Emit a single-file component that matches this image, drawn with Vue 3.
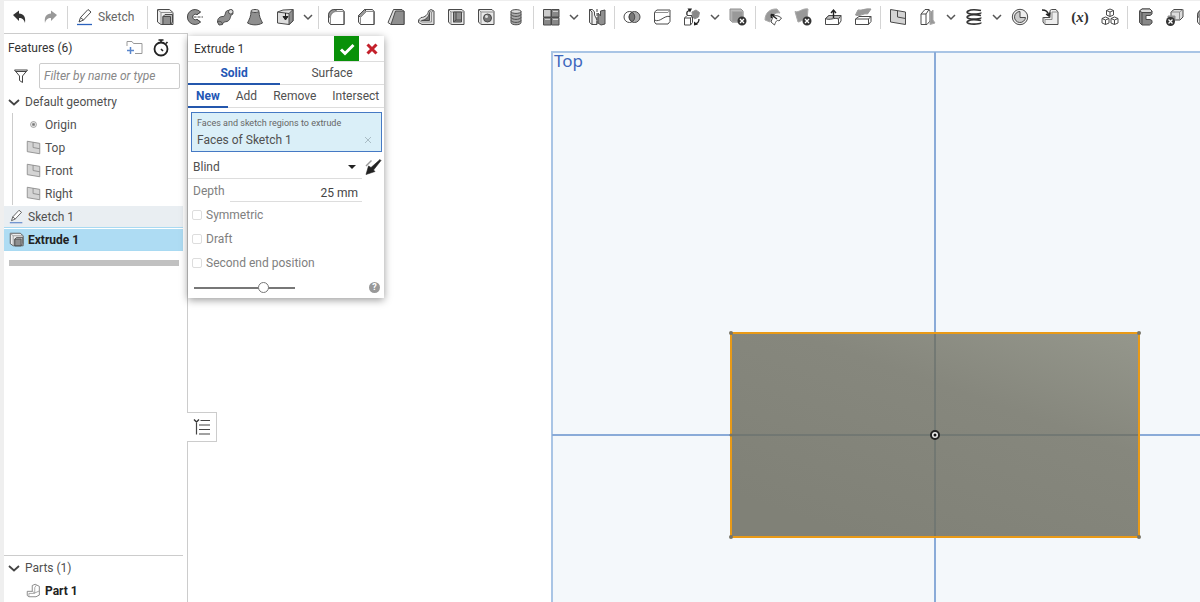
<script setup>
import { ref } from 'vue'

const circle = (x, y, r) => `M${x - r} ${y}a${r} ${r} 0 1 0 ${2 * r} 0a${r} ${r} 0 1 0 ${-2 * r} 0Z`

const D = '#4a4a4a'
const G = '#8f8f8f'
const L = '#e9e9e9'
const W = '#fff'
const N = 'none'
const badge = (x, y) => [
  { d: circle(x, y, 4.5), f: '#333', s: N },
  { d: `M${x - 2} ${y - 2}l4 4M${x + 2} ${y - 2}l-4 4`, f: N, s: W, w: 1.3 },
]

const icons = {
  undo: [{ d: 'M2 7 8 2.5V5.5C12.5 5.5 15 9 14 15 13 11.5 11.5 10 8 10V13Z', f: '#333', s: N }],
  redo: [{ d: 'M16 7 10 2.5V5.5C5.5 5.5 3 9 4 15 5 11.5 6.500 10 10 10V13Z', f: '#999', s: N }],
  pencil: [
    { d: 'M3 14 4.5 9.5 12 1.5 15 4 7.500 12ZM4.5 9.5 7.5 12', f: W, s: D },
    { d: 'M1 16.5H16', f: N, s: '#2b62bd', w: 1.3 },
  ],
  extrude: [
    { d: 'M1.500 1.5H13.5L17 4.5V16.5H5L1.5 14Z', f: '#eee', s: D },
    { d: 'M1.5 1.5 5 4.5V16.5M5 4.5H17', f: N, s: G },
    { d: 'M7 8.500 9 6.5H16.5V14L14.5 16.500H7Z', f: '#bbb', s: D },
    { d: 'M7 8.500H14.5V16.500H7Z', f: G, s: D },
  ],
  revolve: [
    { d: 'M14.500 4A7.500 7.500 0 1 0 14.500 14L11 11.300A2.800 2.800 0 1 1 11 6.700Z', f: G, s: D },
    { d: 'M14.500 4 11 6.700M14.500 14 11 11.300', f: W, s: D },
    { d: 'M7.500 9H17', f: N, s: D, dash: '3 1' },
  ],
  sweep: [
    { d: 'M1.500 14C1.500 10 4 8.500 7 8.500 10 8.500 8.500 3.500 11.500 2.500L16 2 17 6C13.500 6.500 15.500 12 11 13.500 8 14 7 14 6.500 16.500L3 17Z', f: G, s: D },
    { d: circle(14.8, 3.8, 2.3), f: '#ddd', s: D },
    { d: 'M1.500 14C3 12.500 6 13.500 6.500 16', f: N, s: D },
  ],
  loft: [
    { d: 'M5 3.500C5 8 3.500 11 1.500 15 6 17.500 12 17.500 16.500 15 14.500 11 13 8 13 3.500Z', f: G, s: D },
    { d: 'M5 3C5 1 13 1 13 3S5 5 5 3Z', f: '#ccc', s: D },
  ],
  thicken: [
    { d: 'M1.500 4 7 2 17 1.5V13L13 16.500 1.500 15Z', f: '#ddd', s: D },
    { d: 'M13 5.500 17 1.5V13L13 16.500Z', f: G, s: D },
    { d: 'M1.500 4 13 5.500', f: N, s: D },
    { d: 'M9.500 5V10M7 8.500H12L9.500 12Z', f: '#222', s: '#222' },
  ],
  fillet: [
    { d: 'M1.500 14V8C1.500 4 4 1.500 8 1.500H15.500L17 3.500V16.500H3.500Z', f: '#eee', s: D },
    { d: 'M1.500 8C1.500 4 4 1.500 8 1.500L10 3.500C6 3.500 3.500 6 3.500 10Z', f: '#999', s: D },
    { d: 'M3.500 16.500V10C3.500 6 6 3.500 10 3.500H17V16.500Z', f: W, s: G },
    { d: 'M17 3.500V16.500H3.500', f: N, s: D },
  ],
  chamfer: [
    { d: 'M1.500 14V7.500L7.500 1.500H15.500L17 3.500V16.500H3.500Z', f: '#eee', s: D },
    { d: 'M1.500 7.500 7.500 1.500 9.500 3.500 3.500 9.500Z', f: '#999', s: D },
    { d: 'M3.500 16.500V9.500L9.500 3.500H17V16.500Z', f: W, s: G },
    { d: 'M17 3.500V16.500H3.500', f: N, s: D },
  ],
  draft: [
    { d: 'M1 14.500 6.500 1.500H15L17 3.500V16.500H4Z', f: '#ddd', s: D },
    { d: 'M4 16.500 8.500 3H17V16.500Z', f: G, s: D },
  ],
  rib: [
    { d: 'M1.500 12 4 9.500C8 9.500 11 6.500 11.500 3L14 1.500 17 3V16.500H5L1.500 14.500Z', f: '#ddd', s: D },
    { d: 'M4.500 12.500C9 12 12 8.500 12.500 4.500V12.500Z', f: '#777', s: D },
    { d: 'M1.500 12 5 14H14.500V4L17 3M14.500 4 11.500 3', f: N, s: G },
  ],
  shell: [
    { d: 'M1.500 1.500H15L17 3.500V16.500H4L1.500 14Z', f: L, s: D },
    { d: 'M1.500 1.500 4 4V16.500M4 4H17', f: N, s: G },
    { d: 'M6.500 4H14.500V14H6.500Z', f: G, s: D },
    { d: 'M9 4V12L6.500 14M9 12H14.500', f: N, s: D },
  ],
  hole: [
    { d: 'M1.500 1.500H15L17 3.500V16.500H4L1.500 14Z', f: L, s: D },
    { d: 'M1.500 1.500 4 4V16.500M4 4H17', f: N, s: G },
    { d: circle(10.5, 10, 4), f: '#777', s: D },
    { d: circle(9.5, 8.5, 1.5), f: '#ddd', s: N },
  ],
  thread: [
    { d: 'M4 3.500V14.500C4 17.500 14 17.500 14 14.500V3.500Z', f: '#aaa', s: D },
    { d: 'M4 3.500C4 1 14 1 14 3.500S4 6 4 3.500Z', f: '#ddd', s: D },
    { d: 'M4 6.500C5 9 13 9 14 6.500M4 9.500C5 12 13 12 14 9.500M4 12.500C5 15 13 15 14 12.500', f: N, s: D },
  ],
  pattern: [
    { d: 'M1.500 1.500H9V9H1.500Z', f: '#ccc', s: D },
    { d: 'M9.500 1.500H17V9H9.500ZM1.500 9.500H9V17H1.500ZM9.500 9.500H17V17H9.500Z', f: '#888', s: D },
    { d: 'M3 3.500H8M11 3.500H16M3 11.500H8M11 11.500H16', f: N, s: '#ccc' },
  ],
  mirror: [
    { d: 'M1.500 1.500H4.500L6.500 4V7L9 12V16.500H4L1.500 14.500Z', f: '#eee', s: D },
    { d: 'M1.500 1.500 4 4V16.500', f: N, s: D },
    { d: 'M17 2 12.500 3V8L10 5V15L13 17 17 16Z', f: G, s: D },
    { d: 'M9 1V17', f: N, s: D, dash: '3 1' },
  ],
  boolean: [
    { d: circle(6.5, 9, 5.5), f: N, s: D },
    { d: circle(11.5, 9, 5.5), f: '#aaa', s: D },
    { d: 'M9 4.200A5.500 5.500 0 0 1 9 13.800 5.500 5.500 0 0 1 9 4.200Z', f: '#777', s: D },
  ],
  split: [
    { d: 'M1.500 4 4 2H17V13.500L15 16H3L1.500 14Z', f: W, s: D },
    { d: 'M1.500 4.500H15L17 2', f: N, s: G },
    { d: 'M1.500 12C7 15 11 7 17 8.500', f: N, s: D },
  ],
  transform: [
    { d: 'M1.500 10 4 7.500H9.500V14.500L7.500 17H1.500ZM1.500 10H7.500V17M7.500 10 9.500 7.500', f: W, s: D },
    { d: 'M9 4 13 2 16.500 4.500 15.500 9 11.500 11 9.500 8Z', f: '#888', s: G },
    { d: 'M4 7C3.500 4 4 3.500 6 2.500M16 11C16 14 14.500 15.500 12 16', f: N, s: '#222', w: 1.3 },
    { d: 'M4.500 .5H9L7 4.500ZM11 13.500V17.500L15 16.500Z', f: '#222', s: N },
  ],
  deletePart: [
    { d: 'M1 1H12L14 3V14H3L1 12Z', f: '#bbb', s: G },
    { d: 'M3 3.500H14V14H3Z', f: '#999', s: '#aaa' },
    ...badge(13, 13),
  ],
  modifyFillet: [
    { d: 'M1 12C1 5 6 .5 13 1L16 5C11 4 7 8 6 14Z', f: '#999', s: '#aaa' },
    { d: 'M9 8.500C12 7 14 7.500 17.500 10L15 13C13 11.500 12 13 10.500 17L7 14Z', f: W, s: D },
    { d: 'M13 11 7 6.500M7 6.500 7.500 10M7 6.500 10.500 7', f: N, s: '#222', w: 1.3 },
  ],
  deleteFace: [
    { d: 'M1 3.500C5 5 8 0 14 1L13 12C9 10 7 14 4 14Z', f: '#999', s: '#aaa' },
    ...badge(13, 13),
  ],
  moveFace: [
    { d: 'M1.500 10.500 5 7.500H17V13L14.500 16.500H1.500Z', f: W, s: D },
    { d: 'M1.500 10.500 5 7.500H17L14.500 11C10 9 6 13 1.500 10.500Z', f: '#bbb', s: D },
    { d: 'M14.500 11V16.500', f: N, s: D },
    { d: 'M9.500 10V2M7 5 9.500 2 12 5', f: N, s: '#222', w: 1.4 },
  ],
  replaceFace: [
    { d: 'M4 2C8 3 11 0 17 1L13.500 6C9 5 6 9 1.500 7Z', f: '#999', s: '#999' },
    { d: 'M1.500 11 5 8.500H17V13.500L14.500 16.500H1.500ZM1.500 11H14.500L17 8.500M14.500 11V16.500', f: W, s: D },
  ],
  plane: [
    { d: 'M1.500 1.500 16.500 4V16.500L1.500 14Z', f: '#d4d4d4', s: D },
    { d: 'M8.500 2.500V9L16.500 10.500', f: N, s: D },
  ],
  offsetPlane: [
    { d: 'M2 6 6 1.500H10L11 3V13L8 16.500H2ZM2 6H7V16.500M7 6 10 1.500', f: W, s: D },
    { d: 'M11 5 14 2V12L16 15 11 16.500Z', f: '#999', s: '#aaa' },
  ],
  helix: [
    { d: 'M16 2.500C3 0 -2 5 6 6C12 6.500 16 5.500 16 4.500M16 7.500C3 5 -2 10 6 11C12 11.500 16 10.500 16 9.500M16 12.500C3 10 -2 15 6 16C12 16.500 16 15.500 16 14.500', f: N, s: '#333', w: 1.6 },
  ],
  pipe: [
    { d: circle(9, 9, 7.7), f: '#eee', s: D },
    { d: 'M9 3.500A5.500 5.500 0 1 0 14.500 9.500H9Z', f: '#ccc', s: D },
  ],
  derive: [
    { d: 'M9 5.500V2.500L10.500 1.500H15L17 4V16.500H4L2 14V9.500H9Z', f: '#eee', s: D },
    { d: 'M4 16.500V11.500H11V4H17M2 9.500 4 11.500', f: N, s: G },
    { d: 'M1 2C5 2 7 3 7.500 7M5 6 8 8 9 4.500', f: N, s: '#222', w: 1.5 },
  ],
  cubes: [
    { d: 'M9 1 12.500 2.500V7L9 8.500 5.500 7V2.500ZM5.500 2.500 9 4 12.500 2.500M9 4V8.500', f: W, s: D },
    { d: 'M4.500 9 8 10.500V15L4.500 16.500 1 15V10.500ZM1 10.500 4.500 12 8 10.500M4.500 12V16.500', f: W, s: D },
    { d: 'M13.500 9 17 10.500V15L13.500 16.500 10 15V10.500ZM10 10.500 13.500 12 17 10.500M13.500 12V16.500', f: W, s: D },
  ],
  sheet: [
    { d: 'M3.500 3 6 1H14L16 3V6L14 7.500H10V11.500H14L16 12.500V15L13.500 17H6L3.500 14.500Z', f: '#888', s: D },
    { d: 'M3.500 3 6 1H14L16 3 15 4.500H6Z', f: '#ddd', s: D },
    { d: 'M6 4.500V16.500', f: N, s: D },
  ],
  finish: [
    { d: 'M5 4 8 1.500H17V9L14 12H5Z', f: '#ddd', s: D },
    { d: 'M5 4H13.500L17 1.500M13.500 4V11.500', f: N, s: G },
    { d: 'M2 8H9V12H2Z', f: G, s: G },
    ...badge(4.5, 13.5),
  ],
  folder: [
    { d: 'M2 7V2.500H7L8.500 4.500H17V14.500H10', f: N, s: '#999' },
    { d: 'M5.500 8V15M2 11.500H9', f: N, s: '#5a86cc', w: 1.5 },
  ],
  timer: [
    { d: circle(9, 10, 6.5), f: N, s: '#222', w: 1.8 },
    { d: 'M9 10 11 12M9 3V1M6.500 1H11.500M14 4.500 15.500 3', f: N, s: '#222', w: 1.6 },
  ],
  funnel: [{ d: 'M2.500 3H15.500L10.500 9V15.500L7.500 13.500V9ZM3.500 4.500H14.500', f: N, s: '#444' }],
  origin: [{ d: circle(9, 9, 3.5), f: N, s: '#888' }, { d: circle(9, 9, 1.5), f: '#777', s: N }],
  part: [
    { d: 'M1.500 10H7.500V3L11 1.500 16 4V14.500L12 16.500H3.500L1.500 15Z', f: W, s: '#777' },
    { d: 'M7.500 10 10.500 12V5.500L12.500 2.500M10.500 12 16 9.500M3.500 16.500V12.500H10.500', f: N, s: '#999' },
  ],
  list: [
    { d: 'M1 1.500 3.500 4 6 1.500', f: N, s: '#333', w: 1.4 },
    { d: 'M7.500 2.500H17M6 7H17M6 11.500H17M6 16H17M3.500 5V16.500', f: N, s: '#444', w: 1.2 },
  ],
  flip: [
    { d: 'M2 16.500 4.500 8 7 9.500 16 1.500 17 2.500 9.500 12 11 13.500Z', f: '#222', s: '#222', w: .6 },
    { d: 'M2 8 7.500 2.500', f: N, s: '#999', w: 1.5 },
  ],
  check: [{ d: 'M3 9.500 7 13.500 15.500 5', f: N, s: W, w: 3 }],
  cross: [{ d: 'M4.500 4.500 13.500 13.500M13.500 4.500 4.500 13.500', f: N, s: '#c4202b', w: 3 }],
}

const tools = [
  'extrude', 'revolve', 'sweep', 'loft', 'thicken', 'more', '|',
  'fillet', 'chamfer', 'draft', 'rib', 'shell', 'hole', 'thread', '|',
  'pattern', 'more', 'mirror', '|',
  'boolean', 'split', 'transform', 'more', 'deletePart', '|',
  'modifyFillet', 'deleteFace', 'moveFace', 'replaceFace', '|',
  'plane', 'offsetPlane', 'more', 'helix', 'more', 'pipe', 'derive', 'variable', 'cubes', '|',
  'sheet', 'finish', 'fillet',
]

const geometry = [
  { name: 'Origin', icon: 'origin' },
  { name: 'Top', icon: 'plane' },
  { name: 'Front', icon: 'plane' },
  { name: 'Right', icon: 'plane' },
]

const operations = ['New', 'Add', 'Remove', 'Intersect']
const body = ref('Solid')
const operation = ref('New')
const filter = ref('')
const depth = ref('25 mm')
const opacity = ref(71)
const options = ref([
  { name: 'Symmetric', on: false },
  { name: 'Draft', on: false },
  { name: 'Second end position', on: false },
])
</script>

<template>
  <div class="app">
    <header class="toolbar">
      <button v-for="n in ['undo', 'redo']" :key="n" class="tool" :aria-label="n">
        <svg class="icon" viewBox="0 0 18 18"><path v-for="(p, i) in icons[n]" :key="i" :d="p.d" :fill="p.f" :stroke="p.s" /></svg>
      </button>
      <span class="sep"></span>
      <button class="sketch">
        <svg class="icon" viewBox="0 0 18 18"><path v-for="(p, i) in icons.pencil" :key="i" :d="p.d" :fill="p.f" :stroke="p.s" :stroke-width="p.w" /></svg>
        Sketch
      </button>
      <span class="sep"></span>
      <template v-for="(t, k) in tools" :key="k">
        <span v-if="t === '|'" class="sep"></span>
        <button v-else-if="t === 'more'" class="more" aria-label="More tools">
          <svg class="chev" viewBox="0 0 10 10"><path d="M1 3 5 7 9 3" fill="none" stroke="#555" stroke-width="1.500" /></svg>
        </button>
        <button v-else-if="t === 'variable'" class="tool variable">(<i>x</i>)</button>
        <button v-else class="tool" :aria-label="t">
          <svg class="icon" viewBox="0 0 18 18"><path v-for="(p, i) in icons[t]" :key="i" :d="p.d" :fill="p.f" :stroke="p.s" :stroke-width="p.w" :stroke-dasharray="p.dash" /></svg>
        </button>
      </template>
    </header>

    <div class="workspace">
      <aside class="sidebar">
        <div class="heading">
          <span class="title">Features (6)</span>
          <button class="mini" aria-label="Add folder">
            <svg class="icon" viewBox="0 0 18 18"><path v-for="(p, i) in icons.folder" :key="i" :d="p.d" :fill="p.f" :stroke="p.s" :stroke-width="p.w" /></svg>
          </button>
          <button class="mini" aria-label="Regeneration times">
            <svg class="icon" viewBox="0 0 18 18"><path v-for="(p, i) in icons.timer" :key="i" :d="p.d" :fill="p.f" :stroke="p.s" :stroke-width="p.w" /></svg>
          </button>
        </div>
        <div class="filter">
          <svg class="icon" viewBox="0 0 18 18"><path v-for="(p, i) in icons.funnel" :key="i" :d="p.d" :fill="p.f" :stroke="p.s" /></svg>
          <input v-model="filter" type="text" aria-label="Filter features" placeholder="Filter by name or type">
        </div>
        <button class="row group">
          <svg class="fold" viewBox="0 0 12 12"><path d="M1 4 6 8.500 11 4" fill="none" stroke="#444" stroke-width="1.800" /></svg>
          Default geometry
        </button>
        <div class="branch">
          <button v-for="g in geometry" :key="g.name" class="row">
            <svg class="small" viewBox="0 0 18 18"><path v-for="(p, i) in icons[g.icon]" :key="i" :d="p.d" :fill="p.f" :stroke="p.s" /></svg>
            {{ g.name }}
          </button>
        </div>
        <button class="row feature">
          <svg class="small" viewBox="0 0 18 18"><path v-for="(p, i) in icons.pencil" :key="i" :d="p.d" :fill="p.f" :stroke="p.s" /></svg>
          Sketch 1
        </button>
        <button class="row feature active">
          <svg class="small" viewBox="0 0 18 18"><path v-for="(p, i) in icons.extrude" :key="i" :d="p.d" :fill="p.f" :stroke="p.s" /></svg>
          Extrude 1
        </button>
        <div class="rollback"></div>
        <section class="parts">
          <button class="row group">
            <svg class="fold" viewBox="0 0 12 12"><path d="M1 4 6 8.500 11 4" fill="none" stroke="#444" stroke-width="1.800" /></svg>
            Parts (1)
          </button>
          <button class="row part">
            <svg class="small" viewBox="0 0 18 18"><path v-for="(p, i) in icons.part" :key="i" :d="p.d" :fill="p.f" :stroke="p.s" /></svg>
            Part 1
          </button>
        </section>
      </aside>

      <main class="viewport">
        <svg class="scene">
          <defs>
            <linearGradient id="face" x1="0.300" y1="1" x2="1" y2="0">
              <stop offset="0" stop-color="#808177" />
              <stop offset="0.600" stop-color="#86877d" />
              <stop offset="1" stop-color="#95978c" />
            </linearGradient>
          </defs>
          <rect x="364" y="19" width="1600" height="1200" fill="#f4f8fb" stroke="#a9c5e5" stroke-width="2" />
          <path d="M747 19V1200M364 402H1964" stroke="#8aabd8" stroke-width="2" />
          <rect x="543" y="300" width="408" height="204" fill="url(#face)" stroke="#e99a17" stroke-width="2" />
          <path d="M747 301V503M544 402H950" stroke="#6e7571" stroke-width="2" opacity=".8" />
          <g fill="#777567">
            <circle cx="543" cy="300" r="2" /><circle cx="951" cy="300" r="2" />
            <circle cx="543" cy="504" r="2" /><circle cx="951" cy="504" r="2" /><circle cx="543" cy="402" r="1.500" />
          </g>
          <circle cx="747" cy="402" r="4" fill="#eee" stroke="#222" stroke-width="2" />
          <circle cx="747" cy="402" r="1.500" fill="#111" />
          <text x="366" y="34">Top</text>
        </svg>

        <form class="dialog" @submit.prevent>
          <div class="bar">
            <span class="name">Extrude 1</span>
            <button class="ok" aria-label="Accept">
              <svg class="icon" viewBox="0 0 18 18"><path v-for="(p, i) in icons.check" :key="i" :d="p.d" :fill="p.f" :stroke="p.s" :stroke-width="p.w" /></svg>
            </button>
            <button type="button" class="cancel" aria-label="Cancel">
              <svg class="icon" viewBox="0 0 18 18"><path v-for="(p, i) in icons.cross" :key="i" :d="p.d" :fill="p.f" :stroke="p.s" :stroke-width="p.w" /></svg>
            </button>
          </div>
          <div class="tabs kinds">
            <button v-for="b in ['Solid', 'Surface']" :key="b" type="button" :class="{ on: body === b }" @click="body = b">{{ b }}</button>
          </div>
          <div class="tabs ops">
            <button v-for="o in operations" :key="o" type="button" :class="{ on: operation === o }" @click="operation = o">{{ o }}</button>
          </div>
          <div class="selection">
            <span class="caption">Faces and sketch regions to extrude</span>
            <div class="picked">
              <span>Faces of Sketch 1</span>
              <button type="button" aria-label="Remove selection">
                <svg class="chev" viewBox="0 0 10 10"><path d="M2 2 8 8M8 2 2 8" fill="none" stroke="#a9bcc5" /></svg>
              </button>
            </div>
          </div>
          <div class="end">
            <div class="drop">
              <select aria-label="End type"><option>Blind</option></select>
              <svg class="caret" viewBox="0 0 8 8"><path d="M0 2H8L4 6Z" fill="#222" /></svg>
            </div>
            <button type="button" aria-label="Opposite direction">
              <svg class="icon" viewBox="0 0 18 18"><path v-for="(p, i) in icons.flip" :key="i" :d="p.d" :fill="p.f" :stroke="p.s" :stroke-width="p.w" /></svg>
            </button>
          </div>
          <div class="depth">
            <label for="depth">Depth</label>
            <input id="depth" v-model="depth" type="text">
          </div>
          <label v-for="o in options" :key="o.name" class="option">
            <input v-model="o.on" type="checkbox">{{ o.name }}
          </label>
          <div class="foot">
            <input v-model="opacity" type="range" min="0" max="100" aria-label="Preview opacity">
            <button type="button" class="help" aria-label="Help">?</button>
          </div>
        </form>

        <button class="toggle" aria-label="Toggle feature list">
          <svg class="icon" viewBox="0 0 18 18"><path v-for="(p, i) in icons.list" :key="i" :d="p.d" :fill="p.f" :stroke="p.s" :stroke-width="p.w" /></svg>
        </button>
      </main>
    </div>
  </div>
</template>

<style>
body { margin: 0; overflow: hidden; }
</style>

<style scoped>
* { box-sizing: border-box; }
.app {
  display: flex;
  flex-direction: column;
  height: 100vh;
  border-left: 4px solid #efefef;
  background: #fff;
  color: #505050;
  font: 12px/16px Roboto, "Liberation Sans", sans-serif;
}
button { padding: 0; border: 0; background: none; color: inherit; font: inherit; }
input, select { min-width: 0; margin: 0; color: inherit; font: inherit; }
svg { display: block; flex: none; }
.icon { width: 18px; height: 18px; }
.small { width: 15px; height: 15px; }
.chev { width: 10px; height: 10px; }

.toolbar {
  display: flex;
  align-items: center;
  flex: none;
  height: 33px;
  padding-left: 1px;
  border-top: 1px solid #eee;
  overflow: hidden;
}
.tool { display: flex; justify-content: center; flex: none; width: 30px; }
.more { display: flex; justify-content: center; flex: none; width: 16px; }
.sep { flex: none; width: 1px; height: 23px; margin: 0 2px; background: #d4d4d4; }
.sketch { display: flex; align-items: center; gap: 4px; flex: none; width: 75px; padding-left: 6px; }
.sketch { color: #666; }
.variable { font: bold 15px/18px "Liberation Serif", serif; color: #333; }

.workspace { display: flex; flex: 1; min-height: 0; }
.sidebar {
  display: flex;
  flex-direction: column;
  flex: none;
  width: 184px;
  padding-right: 4px;
  border-top: 1px solid #ccc;
  border-right: 1px solid #ccc;
}
.heading { display: flex; align-items: center; height: 28px; padding: 0 13px 0 4px; gap: 9px; }
.title { flex: 1; color: #333; }
.filter { display: flex; align-items: center; gap: 9px; height: 28px; padding: 0 3px 0 8px; }
.filter input {
  flex: 1;
  height: 26px;
  padding: 0 4px;
  border: 1px solid #ccc;
  border-radius: 2px;
  font-style: italic;
}
.filter input::placeholder { color: #888; }
.row { display: flex; align-items: center; flex: none; gap: 4px; width: 100%; height: 23px; text-align: left; }
.group { padding-left: 4px; gap: 5px; }
.fold { width: 12px; height: 12px; }
.branch { margin-left: 8px; border-left: 1px solid #ccc; }
.branch .row { padding-left: 13px; }
.branch .small path { stroke: #888; }
.feature { height: 22px; margin-top: 1px; padding-left: 5px; background: #e9eef2; border-bottom: 1px solid #a9daf2; }
.feature.active { background: #aedcf3; color: #222; font-weight: bold; }
.rollback { height: 6px; margin: 9px 4px 0 5px; background: #c1c1c1; }
.parts { margin-top: auto; border-top: 1px solid #ccc; }
.part { padding-left: 22px; color: #222; font-weight: bold; }

.viewport { position: relative; flex: 1; min-width: 0; }
.scene { width: 100%; height: 100%; }
.scene text { fill: #3e68bd; font: 17px "Noto Sans", sans-serif; }

.dialog {
  position: absolute;
  top: 3px;
  left: 0;
  width: 196px;
  background: #fff;
  box-shadow: 0 2px 8px #0006;
}
.bar { display: flex; align-items: center; height: 26px; padding-left: 6px; border-bottom: 1px solid #ddd; }
.name { flex: 1; color: #333; }
.ok { display: flex; align-items: center; justify-content: center; width: 25px; height: 25px; background: #089108; }
.cancel { display: flex; justify-content: center; width: 25px; }
.tabs { display: flex; height: 23px; border-bottom: 1px solid #ddd; }
.tabs button { height: 23px; border-bottom: 2px solid transparent; }
.tabs .on { border-color: #2457ad; color: #2457b5; font-weight: bold; }
.kinds button { flex: 1; }
.kinds button:first-child { flex: 0 0 47%; }
.ops { justify-content: space-between; }
.ops button { padding: 0 8px; }
.selection { margin: 4px 2px 0 3px; padding: 2px 5px 3px; border: 1px solid #4579c4; background: #daeff8; }
.caption { display: block; color: #666; font-size: 9px; }
.picked { display: flex; align-items: center; justify-content: space-between; height: 17px; }
.picked button { padding-right: 3px; }
.end { display: flex; height: 27px; }
.drop { display: flex; align-items: center; flex: 1; border-bottom: 1px solid #ddd; padding: 3px 6px 0 5px; }
.drop select { flex: 1; appearance: none; border: 0; background: none; padding: 0; }
.caret { width: 8px; height: 8px; }
.end button { width: 22px; padding: 3px 2px 0; }
.depth { display: flex; align-items: center; height: 24px; padding: 0 22px 0 5px; gap: 5px; color: #808080; }
.depth input { flex: 1; height: 22px; padding: 4px 4px 0; border: 0; border-bottom: 1px solid #ddd; text-align: right; color: #444; }
.option { display: flex; align-items: center; gap: 4px; height: 24px; padding-left: 4px; color: #808080; }
.option input { appearance: none; width: 10px; height: 10px; border: 1px solid #ddd; border-radius: 2px; }
.foot { display: flex; align-items: center; justify-content: space-between; height: 23px; padding: 2px 4px 0 6px; }
.foot input { appearance: none; width: 101px; height: 12px; background: linear-gradient(#777, #777) center / 100% 2px no-repeat; }
.foot input::-webkit-slider-thumb { appearance: none; width: 11px; height: 11px; border: 1px solid #777; border-radius: 50%; background: #fff; }
.help { width: 11px; height: 11px; border-radius: 50%; background: #999; color: #fff; font: bold 9px/11px Roboto, sans-serif; }
.toggle {
  position: absolute;
  top: 379px;
  left: -1px;
  display: flex;
  align-items: center;
  justify-content: center;
  width: 30px;
  height: 30px;
  border: 1px solid #ccc;
  border-left: 0;
  background: #fff;
}
</style>
